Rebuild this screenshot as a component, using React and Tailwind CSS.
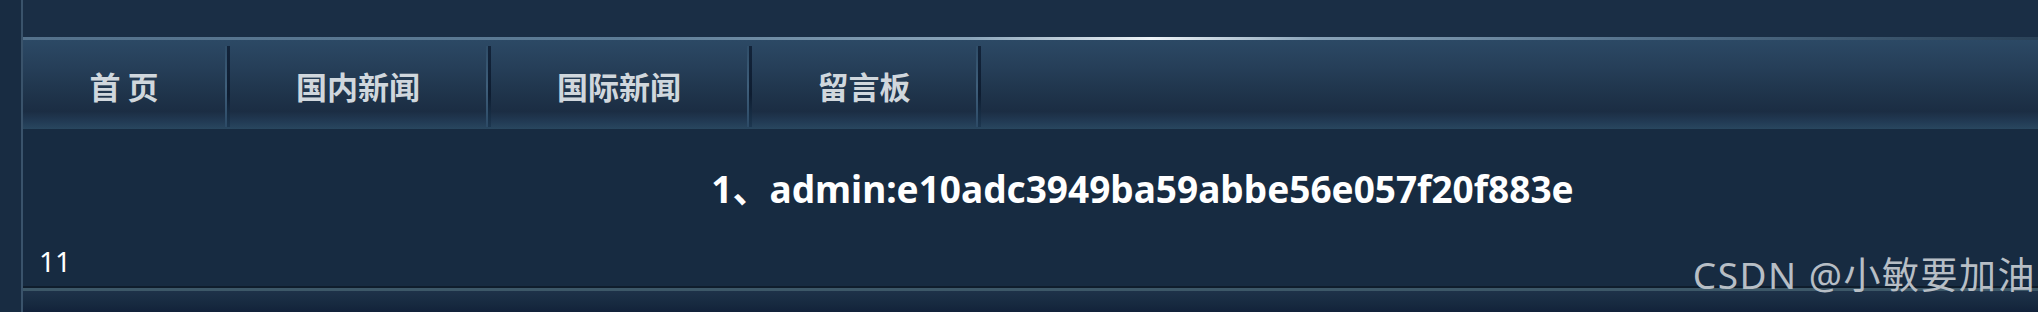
// App.jsx

const navItems = [
  { label: "首 页", width: "w-[202px]" },
  { label: "国内新闻", width: "w-[256px]" },
  { label: "国际新闻", width: "w-[256px]" },
  { label: "留言板", width: "w-[224px]" },
];

function Separator() {
  return (
    <div className="flex mt-[6px] mb-[2px] w-[5px] shrink-0">
      <div className="w-[2px] bg-[linear-gradient(to_bottom,#2f4d68,#3f5f7b_50%,#2c4a66)]" />
      <div className="w-[3px] bg-[linear-gradient(to_bottom,#13243a,#0e1d31_60%,#1d3750)]" />
    </div>
  );
}

export default function App() {
  return (
    <div className="relative w-full h-[312px] overflow-hidden bg-[#182c42] flex">
      {/* left edge line */}
      <div className="w-[21px] shrink-0 bg-[#182c42]" />
      <div className="w-[2px] shrink-0 bg-[#3a536b]" />

      <div className="flex-1 flex flex-col">
        {/* top area */}
        <div className="h-[37px] bg-[#1a2e45]" />

        {/* highlight line */}
        <div className="h-[3px] bg-[linear-gradient(to_right,#54718b,#5d7c96_30%,#8aa4b9_47%,#eef4f8_56%,#8aa4b9_64%,#55728c_80%,#2a4258_100%)]" />

        {/* nav */}
        <div className="h-[89px] flex bg-[linear-gradient(to_bottom,#2c4965_0%,#263f59_30%,#1f344b_60%,#1b2d43_80%,#223b55_92%,#29475f_100%)]">
          {navItems.map((item) => (
            <div key={item.label} className="flex">
              <div
                className={`${item.width} flex items-center justify-center text-[31px] font-bold text-[#d0d7dd] pt-[4px]`}
                style={{ fontFamily: '"Noto Sans CJK SC", "Noto Sans", sans-serif' }}
              >
                {item.label}
              </div>
              <Separator />
            </div>
          ))}
        </div>

        {/* content */}
        <div
          className="h-[157px] bg-[#172b41] flex flex-col"
          style={{ fontFamily: '"Noto Sans", "Noto Sans CJK SC", sans-serif' }}
        >
          <div className="pt-[35px] pl-[224px] text-center text-white text-[37px] font-bold leading-[50px]">
            1、admin:e10adc3949ba59abbe56e057f20f883e
          </div>
          <div className="mt-[27px] pl-[16px] text-white text-[28px] leading-[40px]">11</div>
        </div>

        {/* bottom lines */}
        <div className="h-[2px] bg-[#0f1d2c]" />
        <div className="h-[3px] bg-[#3d5868]" />
        <div className="flex-1 bg-[linear-gradient(to_bottom,#1e3249,#172a40_60%,#12223a)]" />
      </div>

      {/* watermark */}
      <div
        className="absolute right-[2px] top-[256px] text-[37px] leading-[38px] tracking-[1.5px] text-[#b7bec5] whitespace-nowrap"
        style={{ fontFamily: '"Noto Sans", "Noto Sans CJK SC", sans-serif' }}
      >
        CSDN @小敏要加油
      </div>
    </div>
  );
}
